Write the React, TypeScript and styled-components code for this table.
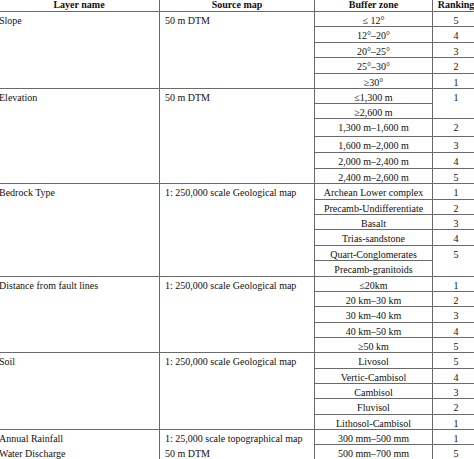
import React from "react";
import styled, { createGlobalStyle } from "styled-components";

const Global = createGlobalStyle`
  html, body { margin: 0; padding: 0; background: #fff; overflow: hidden; }
  body { font-family: "Liberation Serif", "Times New Roman", serif; color: #111; }
`;

const LINE = "#6a6a6a";

const Table = styled.table`
  border-collapse: separate;
  border-spacing: 0;
  table-layout: fixed;
  width: 480px;
  margin: 0 0 0 -1px;
  font-size: 10px;
`;

const Col = styled.col<{ $w: number }>`
  width: ${(p) => p.$w}px;
`;

const HeadRow = styled.tr`
  height: 12px;
`;

const Row = styled.tr<{ $h: number }>`
  height: ${(p) => p.$h}px;
`;

const BaseCell = styled.td`
  box-sizing: border-box;
  padding: 4px 0 0;
  line-height: 10px;
  vertical-align: top;
  white-space: nowrap;
  overflow: hidden;
`;

const HeadCell = styled.th<{ $last?: boolean }>`
  box-sizing: border-box;
  padding: 0;
  line-height: 9px;
  font-weight: bold;
  text-align: center;
  vertical-align: top;
  white-space: nowrap;
  border-bottom: 1px solid ${LINE};
  border-right: ${(p) => (p.$last ? "none" : `1px solid ${LINE}`)};
`;

const NameCell = styled(BaseCell)<{ $open?: boolean }>`
  text-align: left;
  padding-left: 0;
  border-right: 1px solid ${LINE};
  border-bottom: ${(p) => (p.$open ? "none" : `1px solid ${LINE}`)};
`;

const SourceCell = styled(BaseCell)<{ $open?: boolean }>`
  text-align: left;
  padding-left: 5px;
  border-right: 1px solid ${LINE};
  border-bottom: ${(p) => (p.$open ? "none" : `1px solid ${LINE}`)};
`;

const ZoneCell = styled(BaseCell)`
  text-align: center;
  border-right: 1px solid ${LINE};
  border-bottom: 1px solid ${LINE};
`;

const RankCell = styled(BaseCell)`
  text-align: center;
  border-bottom: 1px solid ${LINE};
`;

type ZoneRow = { zone: string; rank?: string; h: number; span?: number };
type Group = { name: string; source: string; open?: boolean; rows: ZoneRow[] };

const GEO = "1: 250,000 scale Geological map";

const groups: Group[] = [
  {
    name: "Slope",
    source: "50 m DTM",
    rows: [
      { zone: "≤ 12°", rank: "5", h: 15 },
      { zone: "12°–20°", rank: "4", h: 16 },
      { zone: "20°–25°", rank: "3", h: 15 },
      { zone: "25°–30°", rank: "2", h: 16 },
      { zone: "≥30°", rank: "1", h: 15 },
    ],
  },
  {
    name: "Elevation",
    source: "50 m DTM",
    rows: [
      { zone: "≤1,300 m", rank: "1", h: 15, span: 2 },
      { zone: "≥2,600 m", h: 15 },
      { zone: "1,300 m–1,600 m", rank: "2", h: 18 },
      { zone: "1,600 m–2,000 m", rank: "3", h: 16 },
      { zone: "2,000 m–2,400 m", rank: "4", h: 16 },
      { zone: "2,400 m–2,600 m", rank: "5", h: 15 },
    ],
  },
  {
    name: "Bedrock Type",
    source: GEO,
    rows: [
      { zone: "Archean Lower complex", rank: "1", h: 16 },
      { zone: "Precamb-Undifferentiate", rank: "2", h: 15 },
      { zone: "Basalt", rank: "3", h: 15 },
      { zone: "Trias-sandstone", rank: "4", h: 16 },
      { zone: "Quart-Conglomerates", rank: "5", h: 15, span: 2 },
      { zone: "Precamb-granitoids", h: 16 },
    ],
  },
  {
    name: "Distance from fault lines",
    source: GEO,
    rows: [
      { zone: "≤20km", rank: "1", h: 15 },
      { zone: "20 km–30 km", rank: "2", h: 15 },
      { zone: "30 km–40 km", rank: "3", h: 16 },
      { zone: "40 km–50 km", rank: "4", h: 15 },
      { zone: "≥50 km", rank: "5", h: 15 },
    ],
  },
  {
    name: "Soil",
    source: GEO,
    rows: [
      { zone: "Livosol", rank: "5", h: 16 },
      { zone: "Vertic-Cambisol", rank: "4", h: 15 },
      { zone: "Cambisol", rank: "3", h: 15 },
      { zone: "Fluvisol", rank: "2", h: 16 },
      { zone: "Lithosol-Cambisol", rank: "1", h: 15 },
    ],
  },
  {
    name: "Annual Rainfall",
    source: "1: 25,000 scale topographical map",
    open: true,
    rows: [{ zone: "300 mm–500 mm", rank: "1", h: 15 }],
  },
  {
    name: "Water Discharge",
    source: "50 m DTM",
    rows: [{ zone: "500 mm–700 mm", rank: "5", h: 16 }],
  },
];

export default function App() {
  return (
    <>
      <Global />
      <Table>
        <colgroup>
          <Col $w={161} />
          <Col $w={155} />
          <Col $w={118} />
          <Col $w={46} />
        </colgroup>
        <thead>
          <HeadRow>
            <HeadCell>Layer name</HeadCell>
            <HeadCell>Source map</HeadCell>
            <HeadCell>Buffer zone</HeadCell>
            <HeadCell $last>Ranking</HeadCell>
          </HeadRow>
        </thead>
        <tbody>
          {groups.map((g) =>
            g.rows.map((r, i) => (
              <Row key={g.name + i} $h={r.h}>
                {i === 0 && (
                  <>
                    <NameCell rowSpan={g.rows.length} $open={g.open}>
                      {g.name}
                    </NameCell>
                    <SourceCell rowSpan={g.rows.length} $open={g.open}>
                      {g.source}
                    </SourceCell>
                  </>
                )}
                <ZoneCell>{r.zone}</ZoneCell>
                {r.rank !== undefined && (
                  <RankCell rowSpan={r.span ?? 1}>{r.rank}</RankCell>
                )}
              </Row>
            ))
          )}
        </tbody>
      </Table>
    </>
  );
}
